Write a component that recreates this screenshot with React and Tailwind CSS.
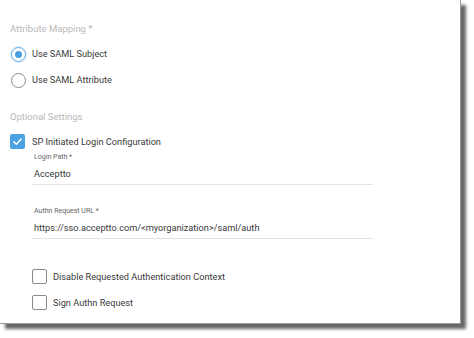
export default function App() {
  const font = { fontFamily: 'Roboto, "Noto Sans", sans-serif' };
  return (
    <div className="w-[474px] h-[338px] bg-white overflow-hidden" style={font}>
      <div className="w-[461px] h-[324px] bg-white border-r border-b border-[#9a9a9a] shadow-[5px_5px_3px_rgba(0,0,0,0.6)] pt-[22px]">
        <div className="pl-[10px] h-[14px] leading-[14px] text-[9.5px] text-[#b8b8b8]">Attribute Mapping *</div>

        <div className="mt-[10px] h-[16px] flex items-center pl-[11px]">
          <span className="w-[15px] h-[15px] rounded-full border-[1.5px] border-[#5aa8e4] flex items-center justify-center shadow-[0_0_2px_rgba(90,168,228,0.6)]">
            <span className="w-[7px] h-[7px] rounded-full bg-[#4a9fe0]"></span>
          </span>
          <span className="ml-[6px] text-[9.2px] text-[#3a3a3a]">Use SAML Subject</span>
        </div>

        <div className="mt-[10px] h-[16px] flex items-center pl-[11px]">
          <span className="w-[15px] h-[15px] rounded-full border border-[#8a8a8a]"></span>
          <span className="ml-[6px] text-[9.2px] text-[#3a3a3a]">Use SAML Attribute</span>
        </div>

        <div className="mt-[22px] pl-[10px] h-[14px] leading-[14px] text-[9.5px] text-[#b8b8b8]">Optional Settings</div>

        <div className="mt-[10px] h-[15px] flex items-center pl-[10px]">
          <span className="w-[15px] h-[15px] rounded-[2px] bg-[#4da2e3] flex items-center justify-center">
            <svg width="11" height="11" viewBox="0 0 12 12" fill="none">
              <path d="M2 6.3 L4.8 9 L10 3.2" stroke="white" strokeWidth="1.6" strokeLinecap="round" strokeLinejoin="round" />
            </svg>
          </span>
          <span className="ml-[7px] text-[9.2px] text-[#3a3a3a]">SP Initiated Login Configuration</span>
        </div>

        <div className="ml-[32px] w-[341px]">
          <div className="mt-[3px] h-[10px] leading-[10px] pl-[2px] text-[7px] text-[#666]">Login Path *</div>
          <div className="mt-[5px] h-[14px] leading-[14px] pl-[2px] text-[9.2px] text-[#3a3a3a]">Acceptto</div>
          <div className="mt-[3px] h-px bg-[#e3e3e3]"></div>

          <div className="mt-[21px] h-[10px] leading-[10px] pl-[2px] text-[7px] text-[#666]">Authn Request URL *</div>
          <div className="mt-[5px] h-[14px] leading-[14px] pl-[2px] text-[9.2px] text-[#3a3a3a]">https://sso.acceptto.com/&lt;myorganization&gt;/saml/auth</div>
          <div className="mt-[3px] h-px bg-[#e3e3e3]"></div>
        </div>

        <div className="mt-[30px] h-[15px] flex items-center pl-[32px]">
          <span className="w-[15px] h-[15px] rounded-[2px] border border-[#8a8a8a]"></span>
          <span className="ml-[6px] text-[9.2px] text-[#3a3a3a]">Disable Requested Authentication Context</span>
        </div>

        <div className="mt-[11px] h-[15px] flex items-center pl-[32px]">
          <span className="w-[15px] h-[15px] rounded-[2px] border border-[#8a8a8a]"></span>
          <span className="ml-[6px] text-[9.2px] text-[#3a3a3a]">Sign Authn Request</span>
        </div>
      </div>
    </div>
  );
}
